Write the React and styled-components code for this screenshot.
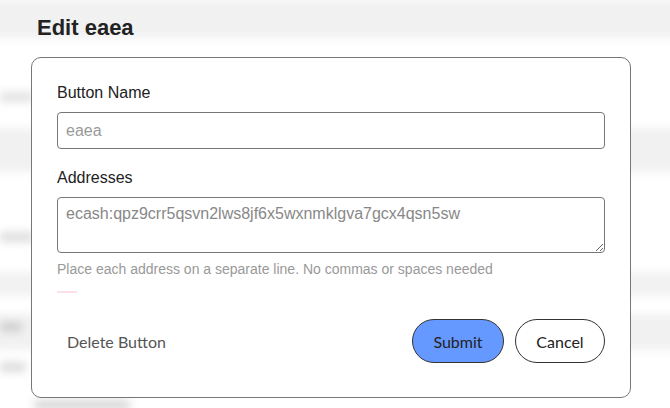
import styled, { createGlobalStyle } from 'styled-components';

const GlobalStyle = createGlobalStyle`
    html, body {
        margin: 0;
        padding: 0;
        background: #ffffff;
    }
    * {
        box-sizing: border-box;
    }
`

const rows = [
    { top: 0, height: 38, shade: '#f1f1f1' },
    { top: 128, height: 44, shade: '#f1f1f1' },
    { top: 272, height: 24, shade: '#f2f2f2' },
    { top: 314, height: 36, shade: '#f1f1f1' },
]

const smudges = [
    { top: 92, left: 0, width: 34, shade: '#e2e2e2' },
    { top: 232, left: 0, width: 34, shade: '#dddddd' },
    { top: 322, left: 0, width: 22, shade: '#cfcfcf' },
    { top: 362, left: 0, width: 26, shade: '#dcdcdc' },
    { top: 400, left: 34, width: 96, shade: '#d8d8d8' },
]

export default function App () {
    return (
        <>
            <GlobalStyle />
            <Screen>
                <Backdrop>
                    {rows.map((r, i) =>
                        <Band key={i} $shade={r.shade} style={{ top: r.top, height: r.height }} />
                    )}
                    {smudges.map((s, i) =>
                        <Smudge key={i} $shade={s.shade} style={{ top: s.top, left: s.left, width: s.width }} />
                    )}
                </Backdrop>
                <Overlay>
                    <Title>Edit eaea</Title>
                    <Modal>
                        <Label>Button Name</Label>
                        <TextInput placeholder="eaea" />
                        <Label $spaced>Addresses</Label>
                        <TextArea defaultValue="ecash:qpz9crr5qsvn2lws8jf6x5wxnmklgva7gcx4qsn5sw" />
                        <Hint>Place each address on a separate line. No commas or spaces needed</Hint>
                        <ErrorBar />
                        <Actions>
                            <DeleteButton>Delete Button</DeleteButton>
                            <ButtonGroup>
                                <PillButton $primary>Submit</PillButton>
                                <PillButton>Cancel</PillButton>
                            </ButtonGroup>
                        </Actions>
                    </Modal>
                </Overlay>
            </Screen>
        </>
    )
}

const Screen = styled.div`
    position: relative;
    width: 670px;
    height: 408px;
    overflow: hidden;
    background: #ffffff;
`
const Backdrop = styled.div`
    position: absolute;
    inset: 0;
    filter: blur(4px);
`
const Band = styled.div`
    position: absolute;
    left: -10px;
    right: -10px;
    background: ${p => p.$shade};
`
const Smudge = styled.div`
    position: absolute;
    height: 10px;
    border-radius: 3px;
    background: ${p => p.$shade};
`
const Overlay = styled.div`
    position: absolute;
    inset: 0;
    display: flex;
    flex-direction: column;
    padding: 15px 0 0 31px;
`
const Title = styled.h2`
    margin: 0 0 0 6px;
    height: 42px;
    font-family: "Liberation Sans", Arial, sans-serif;
    font-weight: bold;
    font-size: 22px;
    line-height: 25px;
    color: #222222;
`
const Modal = styled.div`
    width: 600px;
    height: 341px;
    display: flex;
    flex-direction: column;
    padding: 26px 25px 0 25px;
    background: #ffffff;
    border: 1px solid #777777;
    border-radius: 10px;
`
const Label = styled.label`
    display: block;
    margin: ${p => p.$spaced ? '20px' : '0'} 0 10px;
    font-family: "Liberation Sans", Arial, sans-serif;
    font-size: 16px;
    line-height: 18px;
    color: #222222;
`
const TextInput = styled.input`
    width: 548px;
    height: 37px;
    padding: 0 8px;
    border: 1px solid #777777;
    border-radius: 4px;
    font-family: "Liberation Sans", Arial, sans-serif;
    font-size: 16px;
    color: #222222;
    outline: none;

    &::placeholder {
        color: #999999;
    }
`
const TextArea = styled.textarea`
    width: 548px;
    height: 56px;
    padding: 7px 8px;
    border: 1px solid #777777;
    border-radius: 4px;
    font-family: "Liberation Sans", Arial, sans-serif;
    font-size: 16px;
    line-height: 18px;
    color: #888888;
    outline: none;
`
const Hint = styled.p`
    margin: 8px 0 0;
    font-family: "Liberation Sans", Arial, sans-serif;
    font-size: 14px;
    line-height: 16px;
    color: #999999;
`
const ErrorBar = styled.div`
    width: 20px;
    height: 2px;
    margin-top: 14px;
    background: #fbe1e7;
`
const Actions = styled.div`
    display: flex;
    justify-content: space-between;
    align-items: center;
    margin-top: 26px;
`
const DeleteButton = styled.button`
    padding: 0 10px;
    height: 44px;
    border: none;
    background: none;
    font-family: Lato, "Open Sans", sans-serif;
    font-size: 16px;
    color: #555555;
    cursor: pointer;
`
const ButtonGroup = styled.div`
    display: flex;
    gap: 11px;
`
const PillButton = styled.button`
    width: ${p => p.$primary ? '92px' : '90px'};
    height: 44px;
    border: 1px solid #333333;
    border-radius: 22px;
    background: ${p => p.$primary ? '#6699ff' : '#ffffff'};
    font-family: Lato, "Open Sans", sans-serif;
    font-size: 16px;
    color: #222222;
    cursor: pointer;
`
